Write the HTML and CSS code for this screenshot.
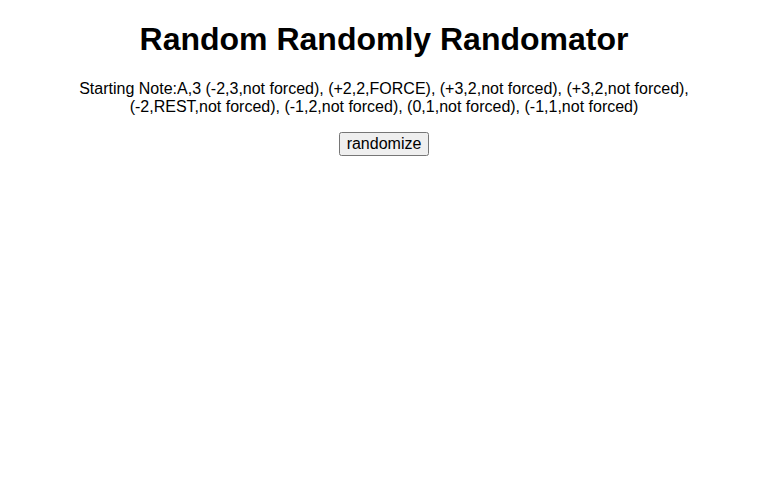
FILE: index.html
```html
<!DOCTYPE html>
<html lang="en">
<head>
    <meta charset="UTF-8">
    <meta name="viewport" content="width=device-width, initial-scale=1.0">
    <title>Random Randomly Randomator</title>
    <link rel="stylesheet" href="styles.css">
</head>
<body>
    <div class="container">
        <h1>Random Randomly Randomator</h1>

        <p id="melody">Starting Note:A,3 (-2,3,not forced), (+2,2,FORCE), (+3,2,not forced), (+3,2,not forced), (-2,REST,not forced), (-1,2,not forced), (0,1,not forced), (-1,1,not forced)</p>

        <button type="button" class="btn" id="randomize">randomize</button>
    </div>
</body>
</html>
```

FILE: styles.css
```css
body {
    margin: 0;
    font-family: 'Liberation Sans', Arial, sans-serif;
    color: #000;
    background-color: #fff;
}

.container {
    max-width: 640px;
    margin: 0 auto;
    text-align: center;
}

h1 {
    font-size: 32px;
}

p {
    font-size: 16px;
}

.btn {
    font-family: 'Liberation Sans', Arial, sans-serif;
    font-size: 16px;
}
```
